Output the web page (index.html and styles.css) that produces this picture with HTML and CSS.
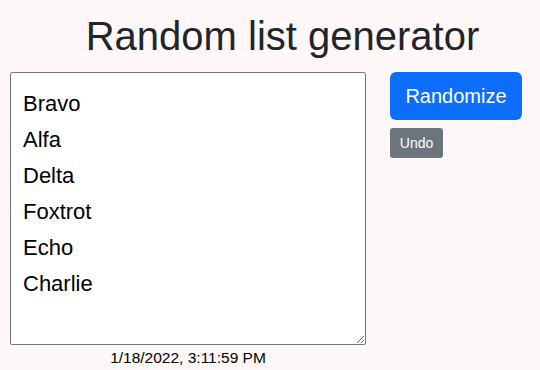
FILE: index.html
```html
<!DOCTYPE html>
<html lang="en">
  <head>
    <meta charset="UTF-8" />
    <meta name="viewport" content="width=device-width, initial-scale=1.0" />
    <title>Random list generator</title>
    <link rel="stylesheet" href="styles.css">
  </head>
  <body>
    <main class="container">
      <h1 class="title">Random list generator</h1>
      <div class="content">
        <div class="list">
          <textarea class="list__input" spellcheck="false">Bravo
Alfa
Delta
Foxtrot
Echo
Charlie</textarea>
          <p class="list__date">1/18/2022, 3:11:59 PM</p>
        </div>
        <div class="actions">
          <button class="btn btn--primary">Randomize</button>
          <button class="btn btn--secondary">Undo</button>
        </div>
      </div>
    </main>
  </body>
</html>
```

FILE: styles.css
```css
* {
  font-family: "Liberation Sans", Arial, sans-serif;
  margin: 0;
  padding: 0;
  box-sizing: border-box;
}
body {
  background-color: #fdf8f7;
  color: #212529;
}
.title {
  font-size: 40px;
  font-weight: 400;
  line-height: 1.2;
  text-align: center;
  padding: 12px 0 0 25px;
  height: 72px;
}
.content {
  display: flex;
  gap: 24px;
  padding-left: 10px;
}
.list {
  width: 356px;
  text-align: center;
}
.list__input {
  display: block;
  width: 356px;
  height: 273px;
  border: 1px solid #767676;
  border-radius: 2px;
  background: #fff;
  color: #000;
  font-size: 22px;
  line-height: 36px;
  padding: 13px 12px 9px;
  resize: vertical;
  outline: none;
}
.list__date {
  font-size: 15.5px;
  line-height: 26px;
  color: #000;
}
.actions {
  display: flex;
  flex-direction: column;
  align-items: flex-start;
  gap: 8px;
}
.btn {
  border: none;
  color: #fff;
  cursor: pointer;
}
.btn--primary {
  background-color: #0d6efd;
  font-size: 20px;
  height: 48px;
  width: 132px;
  border-radius: 6px;
}
.btn--secondary {
  background-color: #6c757d;
  font-size: 14px;
  height: 30px;
  width: 53px;
  border-radius: 3px;
}
```
